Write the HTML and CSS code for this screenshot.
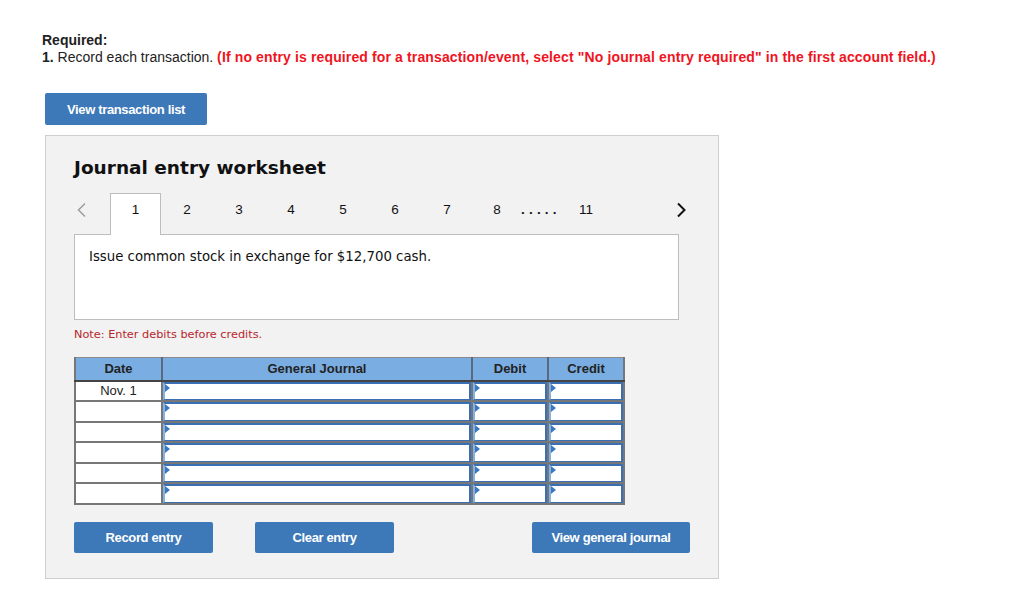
FILE: index.html
```html
<!DOCTYPE html>
<html lang="en">
<head>
<meta charset="utf-8">
<title>Journal entry worksheet</title>
<link rel="stylesheet" href="styles.css">
</head>
<body>
<div class="page">
  <div class="required">
    <p class="req-title">Required:</p>
    <p class="req-text"><b>1.</b> Record each transaction. <span class="req-warn">(If no entry is required for a transaction/event, select "No journal entry required" in the first account field.)</span></p>
  </div>

  <button class="btn btn-list" type="button">View transaction list</button>

  <section class="worksheet">
    <h2 class="ws-title">Journal entry worksheet</h2>

    <nav class="tabs">
      <span class="arrow arrow-prev">
        <svg width="11" height="16" viewBox="0 0 11 16"><path d="M9 1.5 L2.5 8 L9 14.5" fill="none" stroke="#a0a0a0" stroke-width="1.6"/></svg>
      </span>
      <span class="tab active">1</span>
      <span class="tab">2</span>
      <span class="tab">3</span>
      <span class="tab">4</span>
      <span class="tab">5</span>
      <span class="tab">6</span>
      <span class="tab">7</span>
      <span class="tab tab-8">8</span>
      <span class="dots">.....</span>
      <span class="tab tab-11">11</span>
      <span class="arrow arrow-next">
        <svg width="11" height="16" viewBox="0 0 11 16"><path d="M2 1.5 L8.5 8 L2 14.5" fill="none" stroke="#111" stroke-width="2"/></svg>
      </span>
    </nav>

    <div class="description">Issue common stock in exchange for $12,700 cash.</div>

    <p class="note">Note: Enter debits before credits.</p>

    <table class="journal">
      <thead>
        <tr>
          <th class="c-date">Date</th>
          <th class="c-acct">General Journal</th>
          <th class="c-amt">Debit</th>
          <th class="c-amt">Credit</th>
        </tr>
      </thead>
      <tbody>
        <tr>
          <td class="date">Nov. 1</td>
          <td class="in"><div class="field"></div></td>
          <td class="in"><div class="field"></div></td>
          <td class="in"><div class="field"></div></td>
        </tr>
        <tr>
          <td class="date"></td>
          <td class="in"><div class="field"></div></td>
          <td class="in"><div class="field"></div></td>
          <td class="in"><div class="field"></div></td>
        </tr>
        <tr>
          <td class="date"></td>
          <td class="in"><div class="field"></div></td>
          <td class="in"><div class="field"></div></td>
          <td class="in"><div class="field"></div></td>
        </tr>
        <tr>
          <td class="date"></td>
          <td class="in"><div class="field"></div></td>
          <td class="in"><div class="field"></div></td>
          <td class="in"><div class="field"></div></td>
        </tr>
        <tr>
          <td class="date"></td>
          <td class="in"><div class="field"></div></td>
          <td class="in"><div class="field"></div></td>
          <td class="in"><div class="field"></div></td>
        </tr>
        <tr>
          <td class="date"></td>
          <td class="in"><div class="field"></div></td>
          <td class="in"><div class="field"></div></td>
          <td class="in"><div class="field"></div></td>
        </tr>
      </tbody>
    </table>

    <div class="actions">
      <button class="btn btn-record" type="button">Record entry</button>
      <button class="btn btn-clear" type="button">Clear entry</button>
      <button class="btn btn-view" type="button">View general journal</button>
    </div>
  </section>
</div>
</body>
</html>
```

FILE: styles.css
```css
* {
  box-sizing: border-box;
}

html, body {
  margin: 0;
  padding: 0;
  background: #ffffff;
}

body {
  font-family: "Liberation Sans", Arial, sans-serif;
  color: #222;
}

.page {
  padding: 32px 0 0 42px;
}

/* Instructions */
.required p {
  margin: 0;
  font-size: 14px;
  line-height: 17px;
}

.req-title {
  font-weight: bold;
}

.req-warn {
  color: #f0141e;
  font-weight: bold;
  letter-spacing: 0.13px;
}

/* Buttons */
.btn {
  display: flex;
  align-items: center;
  justify-content: center;
  height: 32px;
  padding: 0;
  border: 0;
  border-radius: 2px;
  background: #3d78b8;
  color: #fff;
  font-family: "Liberation Sans", Arial, sans-serif;
  font-weight: bold;
  font-size: 13px;
  letter-spacing: -0.35px;
}

.btn-list {
  width: 162px;
  margin: 27px 0 0 3px;
}

/* Worksheet panel */
.worksheet {
  width: 674px;
  margin: 10px 0 0 3px;
  padding: 20px 28px 25px 28px;
  background: #f2f2f2;
  border: 1px solid #cfcfcf;
}

.ws-title {
  margin: 0;
  font-family: "DejaVu Sans", Verdana, sans-serif;
  font-weight: bold;
  font-size: 18.5px;
  line-height: 24px;
  color: #111;
}

/* Step tabs */
.tabs {
  display: flex;
  align-items: stretch;
  height: 41px;
  margin-top: 13px;
  font-size: 13.5px;
  color: #111;
}

.arrow {
  display: flex;
  align-items: center;
  padding-bottom: 8px;
}

.arrow-prev {
  width: 36px;
  padding-left: 2px;
}

.arrow-next {
  margin-left: auto;
  margin-right: 3px;
}

.tab {
  width: 52px;
  display: flex;
  align-items: center;
  justify-content: center;
  padding-bottom: 8px;
}

.tab.active {
  width: 51px;
  background: #fff;
  border: 1px solid #bdbdbd;
  border-bottom: 0;
  position: relative;
  z-index: 1;
  margin-bottom: -1px;
  padding-bottom: 10px;
}

.tab-8 {
  width: 48px;
}

.dots {
  display: flex;
  align-items: center;
  padding-bottom: 8px;
  font-weight: bold;
  letter-spacing: 4.2px;
  width: 58px;
}

.tab-11 {
  width: 30px;
  justify-content: flex-start;
}

/* Transaction description */
.description {
  width: 605px;
  height: 86px;
  background: #fff;
  border: 1px solid #bdbdbd;
  padding: 14px 14px;
  font-family: "DejaVu Sans", Verdana, sans-serif;
  font-size: 13.3px;
  color: #111;
}

.note {
  margin: 8px 0 0;
  font-family: "DejaVu Sans", Verdana, sans-serif;
  font-size: 11.3px;
  line-height: 14px;
  color: #b8262b;
}

/* Journal table */
.journal {
  margin-top: 15px;
  border-collapse: collapse;
  width: 549px;
  table-layout: fixed;
  border-top: 1px solid #8a8a8a;
  border-left: 2px solid #777;
  border-right: 2px solid #777;
  border-bottom: 2px solid #777;
}

.journal th {
  height: 23px;
  background: #7aaee2;
  font-size: 13px;
  font-weight: bold;
  color: #222;
  padding: 0;
  border-left: 2px solid #5a6a7a;
  border-bottom: 2px solid #444;
}

.journal th:first-child {
  border-left: 0;
}

.c-date { width: 87px; }
.c-acct { width: 310px; }
.c-amt  { width: 76px; }

.journal td {
  height: 20.5px;
  padding: 0;
  background: #fff;
  border-top: 2px solid #777;
  border-left: 2px solid #777;
  vertical-align: top;
}

.journal tr:first-child td {
  border-top: 0;
}

.journal td:first-child {
  border-left: 0;
}

.journal td.date {
  text-align: center;
  vertical-align: middle;
  font-size: 13px;
  color: #222;
}

.field {
  position: relative;
  height: 18.5px;
  border-top: 2px solid #3b6fb3;
  border-left: 2px solid #86b2e0;
  border-right: 2px solid #3b6fb3;
  border-bottom: 1px solid #3b6fb3;
  background: #fff;
}

/* small dropdown marker in the corner of each entry field */
.field::before {
  content: "";
  position: absolute;
  top: 0;
  left: 0;
  border-top: 4px solid transparent;
  border-bottom: 4px solid transparent;
  border-left: 5px solid #3b78c0;
}

/* Footer actions */
.actions {
  display: flex;
  margin-top: 17px;
}

.actions .btn {
  height: 31px;
}

.btn-record,
.btn-clear {
  width: 139px;
}

.btn-clear {
  margin-left: 42px;
}

.btn-view {
  width: 158px;
  margin-left: auto;
}
```
